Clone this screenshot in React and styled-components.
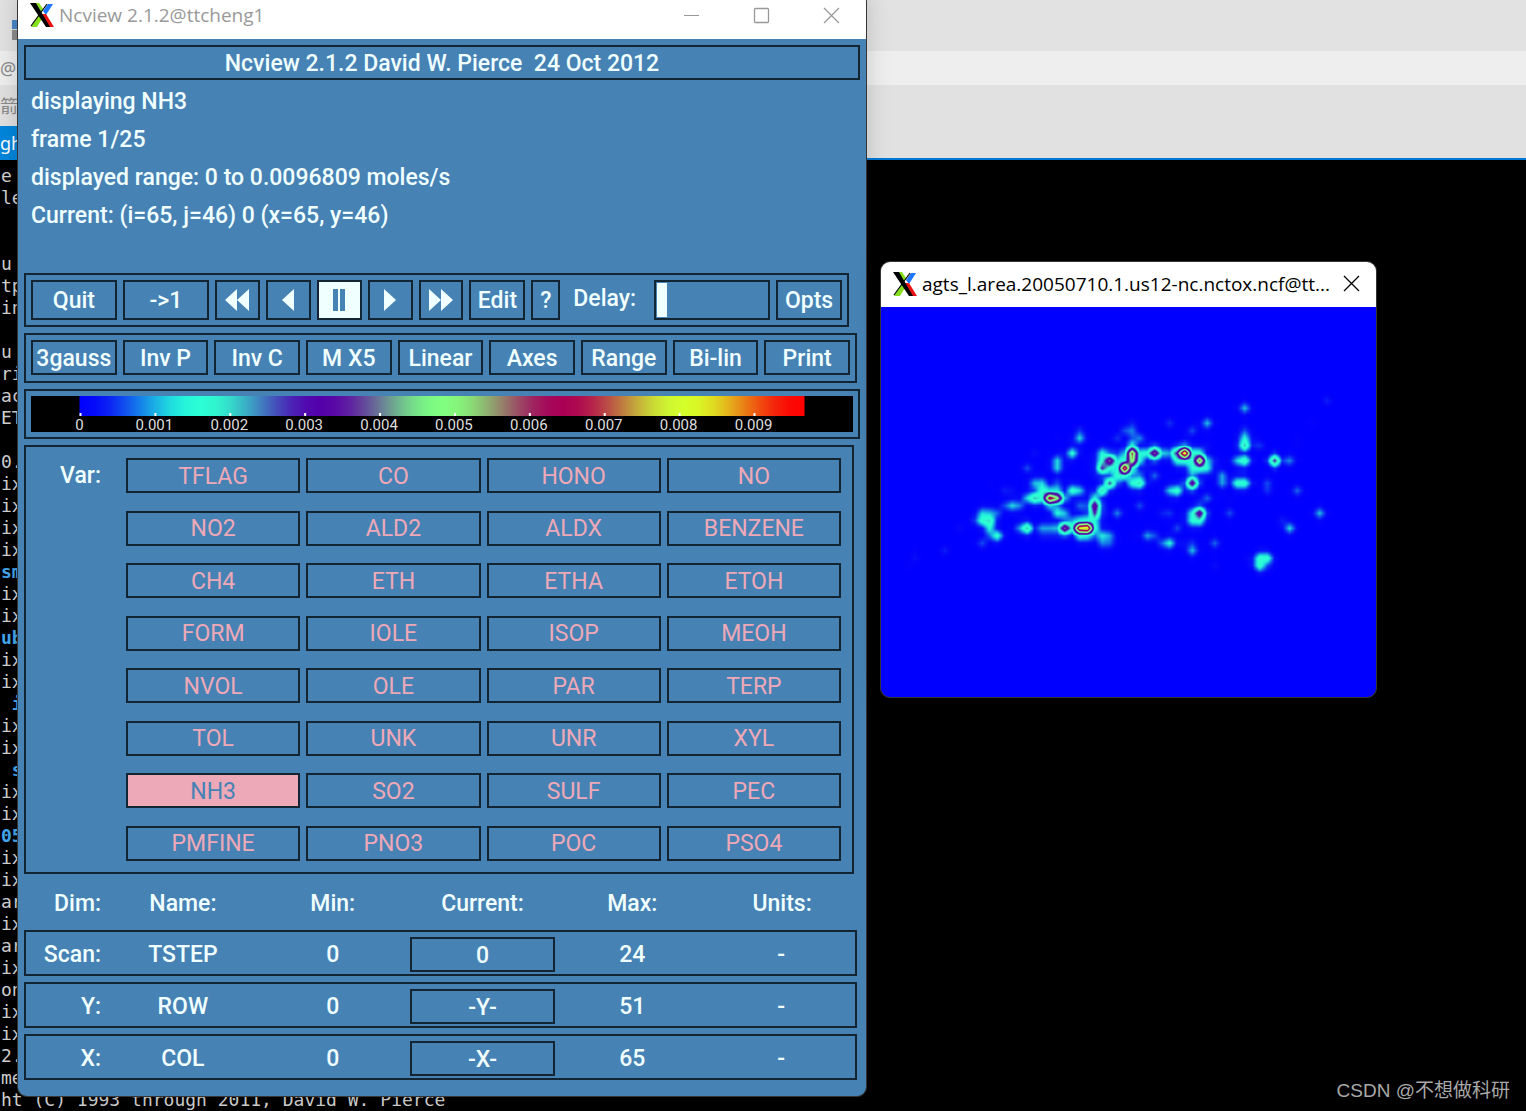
import React, { useEffect, useRef, useState } from "react";

//SC
import styled, { createGlobalStyle } from "styled-components";

const STEEL = "#4682b4";
const AZURE = "#f0ffff";
const PINK = "#eea9b8";
const LINE = "#132433";

const GlobalStyle = createGlobalStyle`
  * {
    box-sizing: border-box;
  }
  body {
    margin: 0;
    background: #000;
    overflow: hidden;
  }
  button {
    font: inherit;
    color: inherit;
    padding: 0;
    margin: 0;
    border: none;
    background: none;
    cursor: pointer;
  }
`;

//3gauss colormap: red goes up, blue goes down, green has three humps
const gauss = (f) => {
  const v = Math.max(0, Math.min(1, f));
  const g = Math.pow(Math.sin(3 * Math.PI * v), 2);
  return [Math.round(255 * v), Math.round(255 * g), Math.round(255 * (1 - v))];
};

const GRID_W = 66;
const GRID_H = 52;

//row: [col, value, col, value ...], value is a share of the displayed range
const EMISSIONS = {
  12: [59, 0.03],
  13: [48, 0.09],
  15: [33, 0.03, 38, 0.04, 43, 0.09, 57, 0.01],
  16: [26, 0.04, 32, 0.05, 33, 0.07, 41, 0.05, 48, 0.05],
  17: [23, 0.01, 26, 0.1, 31, 0.04, 33, 0.05, 34, 0.07, 48, 0.12, 55, 0.01],
  18: [33, 0.12, 40, 0.08, 48, 0.23, 50, 0.04, 43, 0.02, 55, 0.01],
  19: [20, 0.02, 25, 0.13, 29, 0.12, 30, 0.06, 31, 0.04, 32, 0.09, 33, 0.62, 34, 0.12, 35, 0.13, 36, 0.42, 37, 0.1, 38, 0.08, 39, 0.32, 40, 0.92, 41, 0.15, 42, 0.13, 43, 0.02],
  20: [23, 0.1, 27, 0.01, 29, 0.15, 30, 0.42, 31, 0.11, 32, 0.14, 33, 0.54, 34, 0.12, 39, 0.13, 40, 0.14, 41, 0.13, 42, 0.62, 43, 0.1, 44, 0.03, 47, 0.1, 48, 0.2, 52, 0.3, 54, 0.07],
  21: [19, 0.05, 23, 0.1, 28, 0.03, 29, 0.3, 30, 0.13, 31, 0.11, 32, 0.8, 33, 0.15, 35, 0.02, 41, 0.12, 42, 0.15, 43, 0.12],
  22: [28, 0.02, 30, 0.05, 31, 0.14, 32, 0.14, 33, 0.07, 34, 0.07, 36, 0.06, 41, 0.08, 45, 0.08],
  23: [14, 0.01, 20, 0.09, 21, 0.1, 23, 0.05, 30, 0.28, 31, 0.06, 33, 0.13, 34, 0.21, 41, 0.38, 45, 0.08, 47, 0.14, 48, 0.16, 51, 0.05],
  24: [16, 0.03, 17, 0.02, 20, 0.05, 21, 0.14, 22, 0.11, 23, 0.11, 25, 0.14, 26, 0.1, 29, 0.22, 38, 0.1, 39, 0.15, 51, 0.04, 55, 0.06],
  25: [19, 0.1, 20, 0.23, 21, 0.14, 22, 0.72, 23, 0.52, 24, 0.09, 28, 0.12, 42, 0.02, 43, 0.06, 46, 0.01],
  26: [16, 0.05, 17, 0.1, 18, 0.07, 26, 0.06, 28, 0.38, 34, 0.05],
  27: [13, 0.1, 14, 0.09, 15, 0.06, 23, 0.12, 24, 0.09, 28, 0.3, 31, 0.07, 37, 0.03, 38, 0.04, 41, 0.12, 42, 0.38, 46, 0.05, 58, 0.09],
  28: [12, 0.04, 13, 0.15, 14, 0.21, 25, 0.08, 26, 0.12, 27, 0.13, 28, 0.12, 41, 0.13, 42, 0.14, 53, 0.03],
  29: [10, 0.02, 14, 0.12, 18, 0.08, 19, 0.23, 21, 0.08, 22, 0.08, 23, 0.09, 24, 0.42, 25, 0.14, 26, 0.84, 27, 0.92, 28, 0.14, 39, 0.05, 54, 0.1],
  30: [14, 0.06, 15, 0.14, 21, 0.03, 22, 0.03, 23, 0.03, 26, 0.13, 27, 0.12, 28, 0.06, 29, 0.11, 30, 0.08, 33, 0.01, 35, 0.08, 36, 0.05],
  31: [13, 0.05, 29, 0.07, 30, 0.06, 37, 0.06, 38, 0.12, 40, 0.02, 41, 0.04, 44, 0.06],
  32: [4, 0.01, 8, 0.03, 41, 0.09],
  33: [4, 0.02, 48, 0.01, 50, 0.16, 51, 0.15],
  34: [3, 0.01, 44, 0.02, 50, 0.15, 51, 0.05],
};

//weak cells get some gain, up to the first cyan level
const lift = (v) => (v < 0.17 ? Math.min(0.18, v * 1.25) : v);

const buildGrid = () => {
  const grid = Array.from({ length: GRID_H }, () => new Array(GRID_W).fill(0));
  Object.entries(EMISSIONS).forEach(([row, cells]) => {
    for (let k = 0; k < cells.length; k += 2) grid[row][cells[k]] = lift(cells[k + 1]);
  });
  //empty cells take a little from their strongest neighbour
  return grid.map((cells, r) =>
    cells.map((v, c) => {
      if (v) return v;
      const near = [cells[c - 1], cells[c + 1], grid[r - 1]?.[c], grid[r + 1]?.[c]];
      return 0.17 * Math.max(...near.map((n) => n || 0));
    })
  );
};

const Desktop = styled.div`
  position: relative;
  display: flex;
  flex-direction: column;
  height: 100vh;
  overflow: hidden;
  background: #000;
`;

const Strip = styled.div`
  display: flex;
  align-items: center;
  height: ${(p) => p.$height}px;
  background: ${(p) => p.$bg};
  color: #8b8b8b;
  font: 18px/24px "Noto Sans", "Noto Sans CJK SC", sans-serif;
  white-space: nowrap;
`;

const ToolGlyph = styled.span`
  width: 8px;
  height: 20px;
  margin: 10px 0 0 12px;
  background: linear-gradient(#4a86c8 45%, #d8d8d8 45% 50%, #8c8c8c 50%);
`;

const TabStrip = styled.div`
  display: flex;
  height: 34px;
  background: #e1e1e1;
  border-bottom: 2px solid #0078d7;
`;

const Tab = styled.button`
  && {
    width: 60px;
    height: 34px;
    background: #0086dc;
    color: #fff;
    font: 18px/34px "Noto Sans", sans-serif;
    text-align: left;
  }
`;

const Terminal = styled.pre`
  margin: 0;
  padding: 5px 0 0 1px;
  color: #d3d3d3;
  font: 18px/22px "DejaVu Sans Mono", monospace;
`;

const Cyan = styled.b`
  color: #45a9f0;
`;

const Window = styled.section`
  position: absolute;
  overflow: hidden;
  border: 1px solid #353535;
  border-radius: 10px;
  background: #353535;
  box-shadow: 0 0 24px rgba(0, 0, 0, 0.16);
`;

const MainWindow = styled(Window)`
  top: -8px;
  left: 17px;
  right: 659px;
`;

const PlotWindow = styled(Window)`
  top: 261px;
  left: 880px;
  right: 149px;
`;

const TitleBar = styled.header`
  display: flex;
  align-items: center;
  height: ${(p) => p.$height}px;
  padding: 0 ${(p) => p.$right}px 2px 12px;
  gap: 5px;
  background: #fff;
  color: ${(p) => p.$color};
  font: 19px/24px "Open Sans", "Noto Sans", sans-serif;
`;

const TitleText = styled.span`
  flex: 1;
  overflow: hidden;
  white-space: nowrap;
`;

const Controls = styled.div`
  display: flex;
  gap: 53px;
  button {
    display: flex;
  }
`;

const Body = styled.main`
  display: flex;
  flex-direction: column;
  padding: 6px 6px 10px;
  background: ${STEEL};
  color: ${AZURE};
  font: 500 23px/28px Roboto, "Liberation Sans", sans-serif;
`;

const Banner = styled.h1`
  margin: 0;
  height: 35px;
  border: 2px solid ${LINE};
  font: inherit;
  line-height: 33px;
  text-align: center;
  white-space: pre;
`;

const Status = styled.div`
  padding: 3px 7px 0;
  min-height: 193px;
  line-height: 38px;
`;

const Box = styled.div`
  border: 2px solid ${LINE};
  margin: 0 ${(p) => p.$inset || 0}px 6px 0;
  padding: 5px;
`;

const ControlRow = styled(Box)`
  display: grid;
  grid-template-columns: 86fr 86fr 45fr 45fr 45fr 45fr 45fr 56fr 29fr 82fr 116fr 66fr;
  gap: 6px;
`;

const OptionRow = styled(Box)`
  display: grid;
  grid-template-columns: repeat(9, minmax(0, 1fr));
  gap: 6px;
  padding-bottom: 6px;
`;

const Push = styled.button`
  && {
    display: flex;
    align-items: center;
    justify-content: center;
    height: ${(p) => p.$height || 35}px;
    padding-top: 2px;
    border: 2px solid ${LINE};
    background: ${(p) => (p.$on ? AZURE : STEEL)};
    color: ${(p) => (p.$on ? STEEL : AZURE)};
    white-space: nowrap;
  }
`;

//drawn symbols sit in the middle, without the room above a text line
const IconPush = styled(Push)`
  && {
    height: 40px;
    padding-top: 0;
  }
`;

const DelayLabel = styled.label`
  align-self: center;
  padding: 0 0 3px 7px;
`;

const Slider = styled.input`
  appearance: none;
  width: 100%;
  height: 40px;
  margin: 0;
  padding: 1px;
  border: 2px solid ${LINE};
  background: ${STEEL};
  &::-webkit-slider-thumb {
    appearance: none;
    width: 10px;
    height: 34px;
    background: ${AZURE};
  }
`;

const Scale = styled.svg`
  display: block;
  width: 100%;
  height: 36px;
  background: #000;
  font: 15px Roboto, "Liberation Sans", sans-serif;
`;

const VarBox = styled(Box)`
  display: flex;
  margin-bottom: 0;
  padding: 11px;
`;

const VarLabel = styled.div`
  flex: 0 0 89px;
  padding-right: 25px;
  line-height: 35px;
  text-align: right;
`;

const VarGrid = styled.div`
  flex: 1;
  display: grid;
  grid-template-columns: repeat(4, minmax(0, 1fr));
  align-content: space-between;
  column-gap: 6px;
  min-height: 403px;
`;

const VarButton = styled(Push)`
  && {
    font-weight: 400;
    background: ${(p) => (p.$on ? PINK : STEEL)};
    color: ${(p) => (p.$on ? STEEL : PINK)};
  }
`;

const DimTable = styled.table`
  width: calc(100% - 3px);
  table-layout: fixed;
  border-collapse: separate;
  border-spacing: 0 6px;
  text-align: center;

  th,
  td {
    height: 44px;
    padding: 3px 0 0;
    font-weight: 500;
  }
  th:first-child {
    width: 84px;
    padding-right: 7px;
    text-align: right;
  }
  tbody th,
  tbody td {
    height: 46px;
    border: solid ${LINE};
    border-width: 2px 0;
  }
  tbody th {
    border-left-width: 2px;
  }
  tbody td:last-child {
    border-right-width: 2px;
  }
  button {
    width: calc(100% - 5px);
    margin: 0 auto;
  }
`;

const Plot = styled.canvas`
  display: block;
  width: 100%;
  aspect-ratio: 66 / 52;
  background: #00f;
`;

const Watermark = styled.footer`
  position: absolute;
  right: 16px;
  bottom: 8px;
  color: #a9a9a9;
  font: 19px/24px "Liberation Sans", "Noto Sans CJK SC", sans-serif;
`;

const XLogo = () => (
  <svg width="24" height="24" viewBox="0 0 24 24" aria-hidden="true">
    <path d="M5 0h4l4 6-2 4z" fill="#86e01e" />
    <path d="M1 24h6l6-10-3-4z" fill="#86e01e" />
    <path d="M18 1h5l-7 11-3-4z" fill="#1e78ff" />
    <path d="M12 11l4 0 8 13h-6z" fill="#e81414" />
    <path d="M17 1L1 23" stroke="#000" strokeWidth="1.2" />
    <path d="M0 0h6l14 24h-4z" fill="#000" />
  </svg>
);

const CloseIcon = () => (
  <svg width="17" height="17" viewBox="0 0 17 17" stroke="currentColor" strokeWidth="1.3">
    <path d="M1 1l15 15M16 1L1 16" />
  </svg>
);

const Arrows = ({ count, back }) => (
  <svg width={count * 12} height="24" viewBox={`0 0 ${count * 12} 24`} fill="currentColor">
    {Array.from({ length: count }, (_, k) => (
      <path
        key={k}
        d={back ? `M${k * 12} 12l12-11v22z` : `M${k * 12 + 12} 12l-12-11v22z`}
      />
    ))}
  </svg>
);

const PauseIcon = () => (
  <svg width="14" height="22" viewBox="0 0 14 22" fill="currentColor">
    <path d="M1 0h5v22H1zM8 0h5v22H8z" />
  </svg>
);

const TERMINAL_LINES = [
  "e", "le", "", "", "u", "tp", "in", "", "u", "ri", "ac", "ET", "", "0.",
  "ix", "ix", "ix", "ix", "*sm", "ix", "ix", "*ub", "ix", "ix", "* i", "ix",
  "ix", "* s", "ix", "ix", "*05", "ix", "ix", "ar", "ix", "ar", "ix", "on",
  "ix", "ix", "2.", "me", "ht (C) 1993 through 2011, David W. Pierce",
];

const OPTIONS = ["3gauss", "Inv P", "Inv C", "M X5", "Linear", "Axes", "Range", "Bi-lin", "Print"];

const VARS = [
  "TFLAG", "CO", "HONO", "NO",
  "NO2", "ALD2", "ALDX", "BENZENE",
  "CH4", "ETH", "ETHA", "ETOH",
  "FORM", "IOLE", "ISOP", "MEOH",
  "NVOL", "OLE", "PAR", "TERP",
  "TOL", "UNK", "UNR", "XYL",
  "NH3", "SO2", "SULF", "PEC",
  "PMFINE", "PNO3", "POC", "PSO4",
];

const DIMS = [
  { dim: "Scan:", name: "TSTEP", min: 0, current: "0", max: 24 },
  { dim: "Y:", name: "ROW", min: 0, current: "-Y-", max: 51 },
  { dim: "X:", name: "COL", min: 0, current: "-X-", max: 65 },
];

const MAX_VALUE = 0.0096809;
const BAR_START = 5.9;
const BAR_WIDTH = 88.2;

const ColorBar = () => (
  <Scale>
    <defs>
      <linearGradient id="gauss3">
        {Array.from({ length: 49 }, (_, k) => (
          <stop key={k} offset={k / 48} stopColor={`rgb(${gauss(k / 48).join(",")})`} />
        ))}
      </linearGradient>
    </defs>
    <rect x={`${BAR_START}%`} y="0" width={`${BAR_WIDTH}%`} height="20" fill="url(#gauss3)" />
    {Array.from({ length: 10 }, (_, k) => {
      const x = `${BAR_START + (BAR_WIDTH * k) / 1000 / MAX_VALUE}%`;
      return (
        <g key={k}>
          <rect x={x} y="17" width="2" height="3" fill="#fff" />
          <text x={x} y="34" textAnchor="middle" fill="#dedede">
            {k ? `0.00${k}` : "0"}
          </text>
        </g>
      );
    })}
  </Scale>
);

const FieldPlot = () => {
  const ref = useRef(null);

  //bilinear interpolation between the cell centers
  useEffect(() => {
    const canvas = ref.current;
    const w = canvas.width;
    const h = canvas.height;
    const ctx = canvas.getContext("2d");
    const image = ctx.createImageData(w, h);
    const grid = buildGrid();
    const at = (r, c) => (grid[r] && grid[r][c]) || 0;

    for (let y = 0; y < h; y++) {
      const gy = ((y + 0.5) * GRID_H) / h - 0.5;
      const r = Math.floor(gy);
      const fy = gy - r;
      for (let x = 0; x < w; x++) {
        const gx = ((x + 0.5) * GRID_W) / w - 0.5;
        const c = Math.floor(gx);
        const fx = gx - c;
        const top = at(r, c) * (1 - fx) + at(r, c + 1) * fx;
        const low = at(r + 1, c) * (1 - fx) + at(r + 1, c + 1) * fx;
        const rgb = gauss(top * (1 - fy) + low * fy);
        image.data.set([...rgb, 255], (y * w + x) * 4);
      }
    }
    ctx.putImageData(image, 0, 0);
  }, []);

  return <Plot ref={ref} width={495} height={390} aria-label="NH3 field" />;
};

const App = () => {
  const [current, setCurrent] = useState("NH3");
  const [delay, setDelay] = useState(0);

  return (
    <>
      <GlobalStyle />
      <Desktop>
        <Strip $height={51} $bg="#e2e2e2">
          <ToolGlyph />
        </Strip>
        <Strip $height={35} $bg="#eeeeee">@1</Strip>
        <Strip $height={41} $bg="#e1e1e1">箭</Strip>
        <TabStrip>
          <Tab>gh</Tab>
        </TabStrip>
        <Terminal>
          {TERMINAL_LINES.map((line, k) => (
            <React.Fragment key={k}>
              {line[0] === "*" ? <Cyan>{line.slice(1)}</Cyan> : line}
              {"\n"}
            </React.Fragment>
          ))}
        </Terminal>

        <MainWindow>
          <TitleBar $height={46} $right={26} $color="#999">
            <XLogo />
            <TitleText>Ncview 2.1.2@ttcheng1</TitleText>
            <Controls>
              <button aria-label="Minimize">
                <svg width="17" height="17" stroke="currentColor"><path d="M1 8.5h15" /></svg>
              </button>
              <button aria-label="Maximize">
                <svg width="17" height="17" stroke="currentColor" fill="none" strokeWidth="1.3">
                  <rect x="1.5" y="1.5" width="14" height="14" rx="1" />
                </svg>
              </button>
              <button aria-label="Close"><CloseIcon /></button>
            </Controls>
          </TitleBar>

          <Body>
            <Banner>Ncview 2.1.2 David W. Pierce  24 Oct 2012</Banner>
            <Status>
              <div>displaying NH3</div>
              <div>frame 1/25</div>
              <div>displayed range: 0 to 0.0096809 moles/s</div>
              <div>Current: (i=65, j=46) 0 (x=65, y=46)</div>
            </Status>

            <ControlRow $inset={11}>
              <Push $height={40}>Quit</Push>
              <Push $height={40}>-&gt;1</Push>
              <IconPush aria-label="Fast backward"><Arrows count={2} back /></IconPush>
              <IconPush aria-label="Backward"><Arrows count={1} back /></IconPush>
              <IconPush $on aria-label="Pause"><PauseIcon /></IconPush>
              <IconPush aria-label="Forward"><Arrows count={1} /></IconPush>
              <IconPush aria-label="Fast forward"><Arrows count={2} /></IconPush>
              <Push $height={40}>Edit</Push>
              <Push $height={40}>?</Push>
              <DelayLabel htmlFor="delay">Delay:</DelayLabel>
              <Slider
                id="delay"
                type="range"
                value={delay}
                onChange={(e) => setDelay(e.target.value)}
              />
              <Push $height={40}>Opts</Push>
            </ControlRow>

            <OptionRow $inset={3}>
              {OPTIONS.map((name) => (
                <Push key={name}>{name}</Push>
              ))}
            </OptionRow>

            <Box>
              <ColorBar />
            </Box>

            <VarBox $inset={6}>
              <VarLabel>Var:</VarLabel>
              <VarGrid>
                {VARS.map((name) => (
                  <VarButton key={name} $on={name === current} onClick={() => setCurrent(name)}>
                    {name}
                  </VarButton>
                ))}
              </VarGrid>
            </VarBox>

            <DimTable>
              <thead>
                <tr>
                  <th>Dim:</th>
                  <th>Name:</th>
                  <th>Min:</th>
                  <th>Current:</th>
                  <th>Max:</th>
                  <th>Units:</th>
                </tr>
              </thead>
              <tbody>
                {DIMS.map((d) => (
                  <tr key={d.name}>
                    <th>{d.dim}</th>
                    <td>{d.name}</td>
                    <td>{d.min}</td>
                    <td><Push>{d.current}</Push></td>
                    <td>{d.max}</td>
                    <td>-</td>
                  </tr>
                ))}
              </tbody>
            </DimTable>
          </Body>
        </MainWindow>

        <PlotWindow>
          <TitleBar $height={45} $right={16} $color="#000">
            <XLogo />
            <TitleText>agts_l.area.20050710.1.us12-nc.nctox.ncf@tt...</TitleText>
            <Controls>
              <button aria-label="Close"><CloseIcon /></button>
            </Controls>
          </TitleBar>
          <FieldPlot />
        </PlotWindow>

        <Watermark>CSDN @不想做科研</Watermark>
      </Desktop>
    </>
  );
};

export default App;
